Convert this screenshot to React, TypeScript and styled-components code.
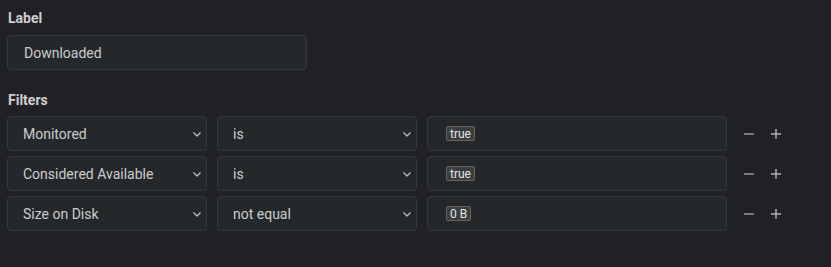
import React from "react";
import styled, { createGlobalStyle } from "styled-components";

const Global = createGlobalStyle`
  html, body { margin: 0; padding: 0; background: #202124; }
  body { font-family: Roboto, "Noto Sans", sans-serif; color: #ccc; }
  * { box-sizing: border-box; }
`;

const Page = styled.div`
  width: 831px;
  height: 267px;
  padding: 8px 7px 0 7px;
  display: flex;
  flex-direction: column;
`;

const SectionTitle = styled.div<{ $top?: number }>`
  font-size: 14px;
  font-weight: 700;
  line-height: 20px;
  color: #cfcfcf;
  padding-left: 1px;
  margin-top: ${(p) => p.$top ?? 0}px;
`;

const TextBox = styled.div`
  width: 300px;
  height: 35px;
  margin-top: 7px;
  background: #25282a;
  border: 1px solid #37393c;
  border-radius: 4px;
  display: flex;
  align-items: center;
  padding-left: 16px;
  font-size: 14px;
  color: #cccccc;
`;

const Rows = styled.div`
  margin-top: 6px;
  display: flex;
  flex-direction: column;
  gap: 5px;
`;

const Row = styled.div`
  display: flex;
  align-items: center;
  gap: 10px;
`;

const Field = styled.div<{ $w: number }>`
  width: ${(p) => p.$w}px;
  height: 35px;
  background: #25282a;
  border: 1px solid #37393c;
  border-radius: 4px;
  display: flex;
  align-items: center;
  padding: 0 4px 0 15px;
  font-size: 14px;
  color: #cccccc;
`;

const FieldText = styled.span`
  flex: 1;
`;

const Chevron = () => (
  <svg width="10" height="10" viewBox="0 0 10 10">
    <path d="M1.5 3.5 L5 7 L8.5 3.5" stroke="#bbbbbb" strokeWidth="1.3" fill="none" />
  </svg>
);

const TagArea = styled(Field)`
  padding-left: 18px;
`;

const Tag = styled.span`
  display: inline-flex;
  align-items: center;
  height: 15px;
  padding: 0 3px;
  font-size: 12px;
  color: #e6e6e6;
  background: #3b3d3f;
  border: 1px solid #6b655e;
  border-radius: 2px;
`;

const Actions = styled.div`
  display: flex;
  align-items: center;
  gap: 11px;
  margin-left: 4px;
`;

const IconBtn = styled.button`
  width: 16px;
  height: 16px;
  padding: 0;
  border: 0;
  background: transparent;
  display: flex;
  align-items: center;
  justify-content: center;
`;

const Minus = () => (
  <svg width="12" height="12" viewBox="0 0 12 12">
    <path d="M1 6 H11" stroke="#9a9a9a" strokeWidth="1.5" />
  </svg>
);
const Plus = () => (
  <svg width="12" height="12" viewBox="0 0 12 12">
    <path d="M1 6 H11 M6 1 V11" stroke="#b0b0b0" strokeWidth="1.5" />
  </svg>
);

const filters = [
  { key: "Monitored", op: "is", value: "true" },
  { key: "Considered Available", op: "is", value: "true" },
  { key: "Size on Disk", op: "not equal", value: "0 B" },
];

export default function App() {
  return (
    <>
      <Global />
      <Page>
        <SectionTitle>Label</SectionTitle>
        <TextBox>Downloaded</TextBox>
        <SectionTitle $top={20}>Filters</SectionTitle>
        <Rows>
          {filters.map((f) => (
            <Row key={f.key}>
              <Field $w={200}>
                <FieldText>{f.key}</FieldText>
                <Chevron />
              </Field>
              <Field $w={200}>
                <FieldText>{f.op}</FieldText>
                <Chevron />
              </Field>
              <TagArea $w={300}>
                <Tag>{f.value}</Tag>
              </TagArea>
              <Actions>
                <IconBtn><Minus /></IconBtn>
                <IconBtn><Plus /></IconBtn>
              </Actions>
            </Row>
          ))}
        </Rows>
      </Page>
    </>
  );
}
